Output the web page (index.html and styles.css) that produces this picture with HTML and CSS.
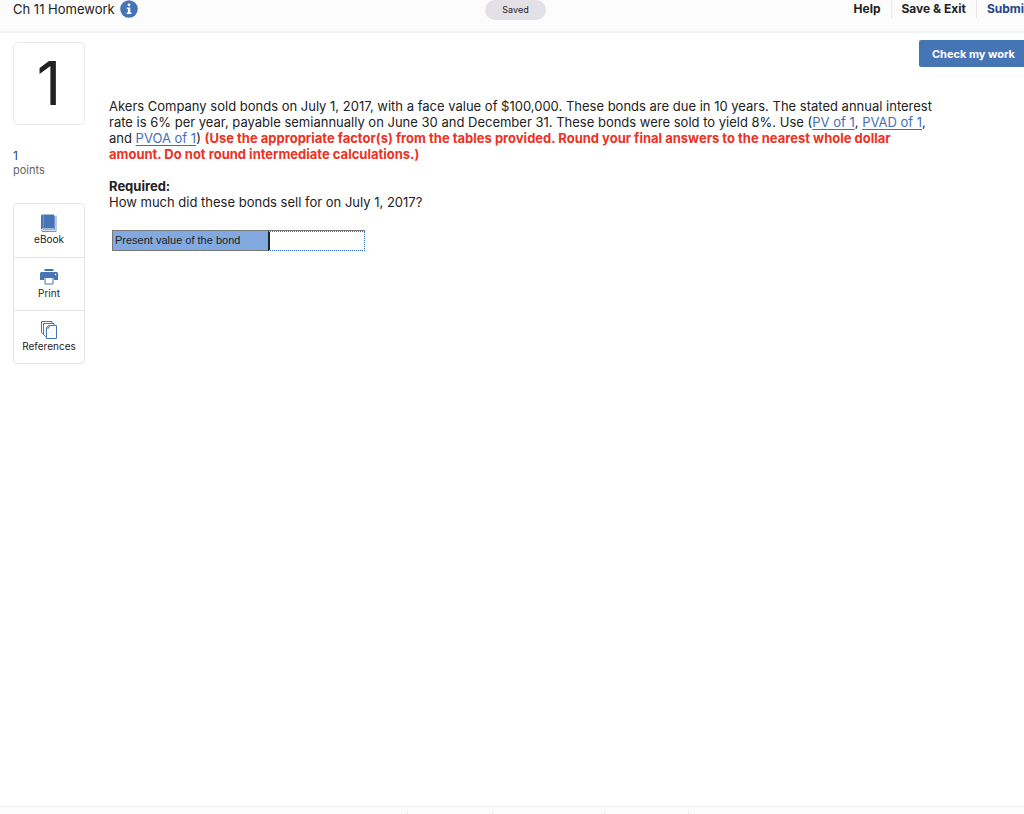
FILE: index.html
```
<!DOCTYPE html>
<html lang="en">
<head>
<meta charset="utf-8">
<title>Ch 11 Homework</title>
<link rel="stylesheet" href="styles.css">
</head>
<body>
<header class="topbar">
  <div class="title">
    <span>Ch 11 Homework</span>
    <button class="info" type="button" aria-label="Assignment information">
      <svg width="18" height="18" viewBox="0 0 18 18"><circle cx="9" cy="9" r="8.8" fill="#4675b5"/><circle cx="9" cy="4.8" r="1.4" fill="#fff"/><path d="M6.8 7.4h3.5v5h1.1v1.5H6.7v-1.5h1.2V8.9H6.8z" fill="#fff"/></svg>
    </button>
  </div>
  <span class="saved">Saved</span>
  <nav class="actions">
    <button class="action" type="button">Help</button>
    <button class="action" type="button">Save &amp; Exit</button>
    <button class="action submit" type="button">Submi</button>
  </nav>
</header>
<div class="workspace">
  <aside class="sidebar">
    <div class="number">1</div>
    <div class="points"><span class="score">1</span><span>points</span></div>
    <div class="tools">
      <button class="tool" type="button">
        <svg width="18" height="18" viewBox="0 0 18 18"><path d="M2.500.5H14v14H2.500A1.500 1.500 0 0 0 1 16V2A1.500 1.500 0 0 1 2.500.5z" fill="#4675b5"/><path d="M3.500 1v13" stroke="#7c9fd0" stroke-width=".8"/><path d="M1.500 16q0 1.500 1.500 1.500h13V1.500M2.500 15.800h12v-14" fill="none" stroke="#6f95cb"/></svg>
        <span>eBook</span>
      </button>
      <button class="tool" type="button">
        <svg width="18" height="18" viewBox="0 0 18 18"><path d="M4.500 1h9v2h-9zM1.500 4h15A1.500 1.500 0 0 1 18 5.500V12h-4v-2H4v2H0V5.500A1.500 1.500 0 0 1 1.500 4z" fill="#4675b5"/><path d="M5 9.500h8v6.500H5z" fill="#fff" stroke="#4675b5"/><circle cx="15.500" cy="6.500" r=".8" fill="#fff"/></svg>
        <span>Print</span>
      </button>
      <button class="tool" type="button">
        <svg width="18" height="18" viewBox="0 0 18 18" fill="#fff" stroke="#4675b5"><path d="M1.500.5H12v13H3.500l-2-2z"/><path d="M3.500 2.500H14v13H5.500l-2-2z"/><path d="M8.500 4.500h8v13h-10V6.500z"/><path d="M9 4.500v2.500H6.500" fill="none"/></svg>
        <span>References</span>
      </button>
    </div>
  </aside>
  <main class="main">
    <div class="toolbar"><button class="check" type="button">Check my work</button></div>
    <section class="question">
      <p>Akers Company sold bonds on July 1, 2017, with a face value of $100,000. These bonds are due in 10 years. The stated annual interest<br>
      rate is 6% per year, payable semiannually on June 30 and December 31. These bonds were sold to yield 8%. Use (<a href="#pv">PV of 1</a>, <a href="#pvad">PVAD of 1</a>,<br>
      and <a href="#pvoa">PVOA of 1</a>) <strong class="note">(Use the appropriate factor(s) from the tables provided. Round your final answers to the nearest whole dollar<br>
      amount. Do not round intermediate calculations.)</strong></p>
      <p><strong>Required:</strong><br>How much did these bonds sell for on July 1, 2017?</p>
      <div class="answer">
        <label for="bond">Present value of the bond</label>
        <span class="field"><input id="bond" type="text"></span>
      </div>
    </section>
  </main>
</div>
<footer class="footer"><span class="cell"></span><span class="cell wide"></span><span class="cell"></span></footer>
</body>
</html>
```
FILE: styles.css
```
* { box-sizing: border-box; }
body {
  margin: 0;
  min-height: 100vh;
  display: flex;
  flex-direction: column;
  background: #fff;
  color: #222;
  font: 13px/16px Inter, sans-serif;
}
button { font: inherit; color: inherit; border: 0; padding: 0; background: none; }
svg { display: block; }
.topbar {
  display: grid;
  grid-template-columns: 1fr auto 1fr;
  align-items: start;
  height: 33px;
  padding-left: 13px;
  border-bottom: 2px solid #f3f3f3;
  background: #fcfcfc;
}
.title { display: flex; align-items: center; gap: 5px; }
.saved {
  height: 20px;
  margin-right: 6px;
  padding: 2px 17px;
  border-radius: 10px;
  background: #e4e1e6;
  font-size: 9px;
}
.actions { display: flex; justify-content: flex-end; font-size: 12px; font-weight: 700; }
.action { height: 18px; padding: 0 10px; white-space: nowrap; border-left: 1px solid #e8e8e8; }
.action:first-child { border-left: 0; }
.submit { padding-right: 0; color: #1f4788; }
.workspace { flex: 1; display: flex; gap: 24px; padding-left: 13px; }
.sidebar { flex: none; width: 72px; padding-top: 9px; }
.number {
  height: 83px;
  border: 1px solid #e8e8e8;
  border-radius: 5px;
  text-align: center;
  font-size: 60px;
  line-height: 81px;
}
.points { display: flex; flex-direction: column; margin: 23px 0 25px; font-size: 11px; line-height: 15px; color: #666; }
.score { font-size: 12px; color: #1f4788; }
.tools { border: 1px solid #e5e5e5; border-radius: 4px; }
.tool {
  display: flex;
  flex-direction: column;
  align-items: center;
  width: 100%;
  height: 53px;
  padding-top: 10px;
  font-size: 10px;
  line-height: 14px;
}
.tool + .tool { border-top: 1px solid #e5e5e5; }
.main { flex: 1; min-width: 0; }
.toolbar { display: flex; justify-content: flex-end; padding-top: 7px; }
.check {
  height: 27px;
  padding: 0 9px 0 13px;
  border-radius: 2px 0 0 2px;
  background: #4675b5;
  color: #fff;
  font-size: 11px;
  font-weight: 700;
}
.question { padding-top: 31px; white-space: nowrap; }
.question p { margin: 0 0 16px; }
.question a { color: #3f6fb8; text-underline-offset: 2px; }
.note { color: #ee3124; }
.answer {
  display: flex;
  width: 253px;
  margin: 20px 3px 0;
  font: 11px/18px "Liberation Sans", Arial, sans-serif;
}
.answer label { width: 156px; padding-left: 2px; border: 1px solid #777; border-right: 0; background: #82aae0; }
.field { flex: 1; border-top: 1px solid #777; }
.field input {
  display: block;
  width: 100%;
  height: 20px;
  padding: 0 4px;
  border: 1px dotted #2f6ac4;
  border-left: 2px solid #222;
  border-radius: 0;
  outline: 0;
  background: #fff;
  font: inherit;
}
.footer {
  display: flex;
  justify-content: center;
  height: 8px;
  padding: 4px 0 0 72px;
  border-top: 1px solid #eee;
  background: #fcfcfc;
}
.cell { width: 85px; border-left: 1px solid #e8e8e8; }
.cell.wide { width: 112px; }
.cell:last-child { border-right: 1px solid #e8e8e8; }
```
